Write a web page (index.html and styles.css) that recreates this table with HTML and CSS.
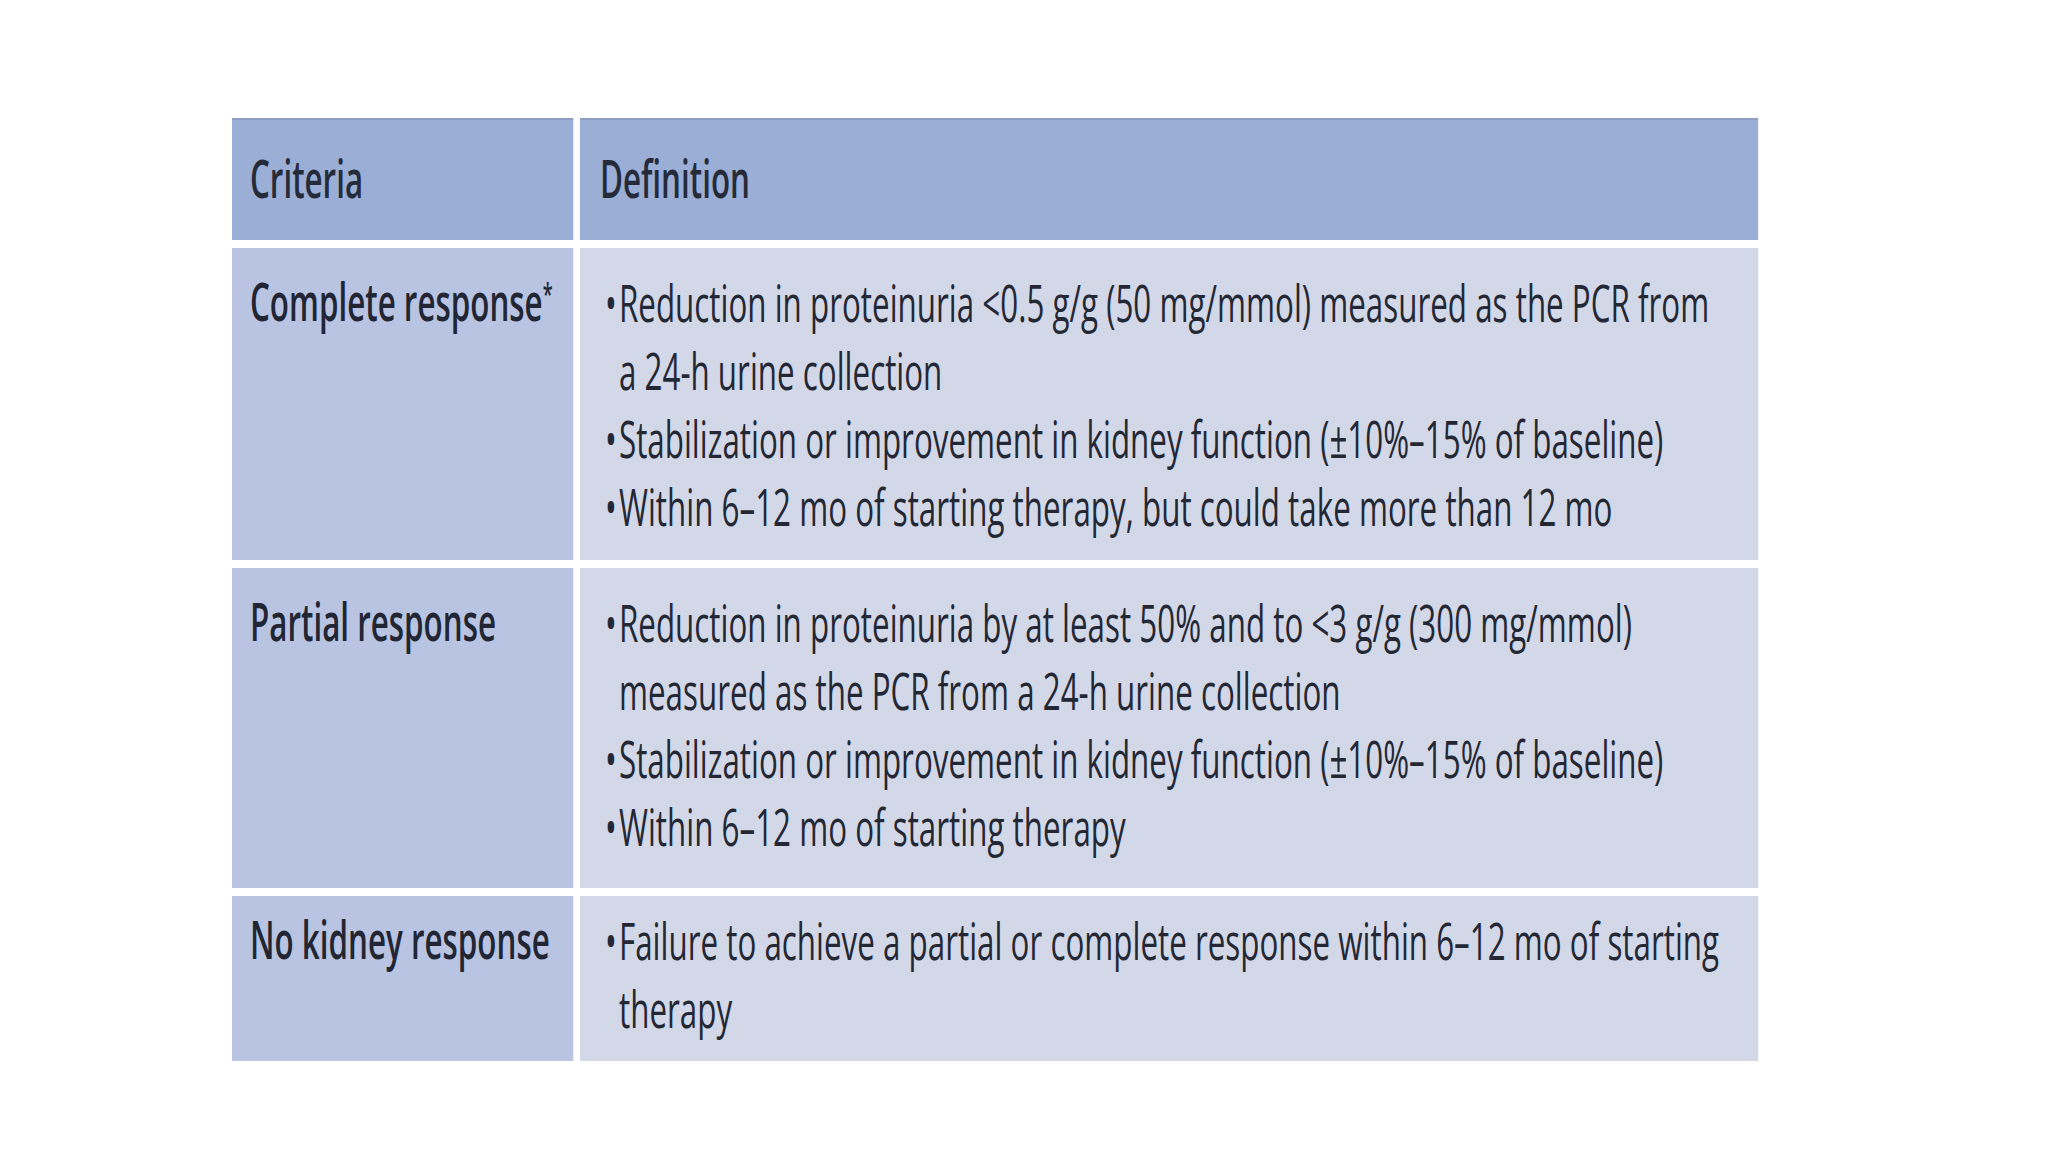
FILE: index.html
```html
<!DOCTYPE html>
<html lang="en">
<head>
<meta charset="utf-8">
<title>Kidney response criteria</title>
<link rel="stylesheet" href="styles.css">
</head>
<body>
<div class="page">
  <div class="table">
    <div class="cell head c1"><span class="htext">Criteria</span></div>
    <div class="cell head c2"><span class="htext">Definition</span></div>

    <div class="cell label">Complete response<span class="ast">*</span></div>
    <div class="cell def">
      <ul class="list">
        <li class="item"><span class="dot">•</span><span class="txt">Reduction in proteinuria &lt;0.5 g/g (50 mg/mmol) measured as the PCR from<br>a 24-h urine collection</span></li>
        <li class="item"><span class="dot">•</span><span class="txt">Stabilization or improvement in kidney function (±10%–15% of baseline)</span></li>
        <li class="item"><span class="dot">•</span><span class="txt">Within 6–12 mo of starting therapy, but could take more than 12 mo</span></li>
      </ul>
    </div>

    <div class="cell label">Partial response</div>
    <div class="cell def">
      <ul class="list">
        <li class="item"><span class="dot">•</span><span class="txt">Reduction in proteinuria by at least 50% and to &lt;3 g/g (300 mg/mmol)<br>measured as the PCR from a 24-h urine collection</span></li>
        <li class="item"><span class="dot">•</span><span class="txt">Stabilization or improvement in kidney function (±10%–15% of baseline)</span></li>
        <li class="item"><span class="dot">•</span><span class="txt">Within 6–12 mo of starting therapy</span></li>
      </ul>
    </div>

    <div class="cell label last">No kidney response</div>
    <div class="cell def last">
      <ul class="list">
        <li class="item"><span class="dot">•</span><span class="txt">Failure to achieve a partial or complete response within 6–12 mo of starting<br>therapy</span></li>
      </ul>
    </div>
  </div>
</div>
</body>
</html>
```

FILE: styles.css
```css
html, body {
  margin: 0;
  padding: 0;
  background: #ffffff;
  overflow: hidden;
}

.page {
  --s: 0.603;
  padding-top: 118px;
  padding-left: 232px;
  width: 2048px;
  height: 1152px;
  box-sizing: border-box;
}

.table {
  display: grid;
  grid-template-columns: calc(341px / var(--s)) calc(1178px / var(--s));
  grid-template-rows: 122px 312px 320px 165px;
  column-gap: calc(7px / var(--s));
  row-gap: 8px;
  width: calc(1526px / var(--s));
  transform: scaleX(var(--s));
  transform-origin: 0 0;
  font-family: "Open Sans", "Noto Sans", "DejaVu Sans", sans-serif;
  font-size: 52px;
  line-height: 68px;
  color: #242835;
}

.cell {
  box-sizing: border-box;
  white-space: nowrap;
}

.head {
  background: #9aaed6;
  display: flex;
  align-items: center;
  padding-bottom: 3px;
  font-weight: 600;
  color: #262b3a;
  box-shadow: inset 0 2px 0 #8f9fc4;
}

.head.c1 {
  padding-left: calc(18px / var(--s));
}

.head.c2 {
  padding-left: calc(20px / var(--s));
}

.label {
  background: #b8c4e1;
  padding-top: 19px;
  padding-left: calc(18px / var(--s));
  font-weight: 600;
  color: #222634;
}

.ast {
  font-size: 30px;
  vertical-align: 16px;
  line-height: 0;
}

.def {
  background: #d3d8e9;
  padding-top: 20px;
  padding-left: calc(25px / var(--s));
}

.label.last {
  padding-top: 9px;
}

.def.last {
  padding-top: 10px;
}

.list {
  list-style: none;
  margin: 0;
  padding: 0;
}

.item {
  display: flex;
}

.dot {
  width: calc(14px / var(--s));
  flex: none;
}

.txt {
  display: block;
}
```
